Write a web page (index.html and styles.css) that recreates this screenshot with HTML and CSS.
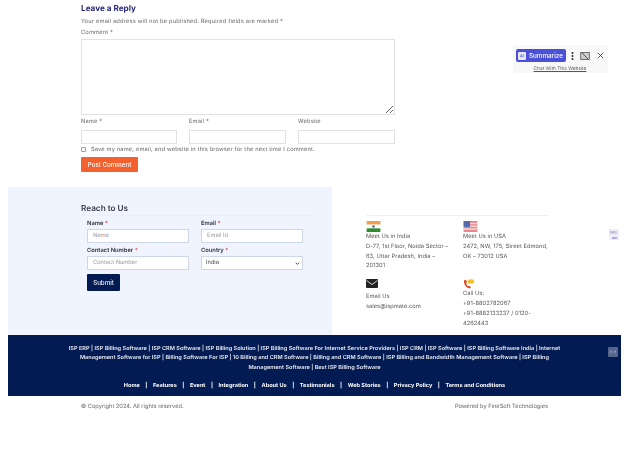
FILE: index.html
```html
<!DOCTYPE html>
<html lang="en">
<head>
<meta charset="utf-8">
<title>Leave a Reply</title>
<link rel="stylesheet" href="styles.css">
</head>
<body>
<main class="page">
  <section class="reply">
    <div class="reply-clip"><h2 class="reply-title">Leave a Reply</h2></div>
    <p class="reply-note">Your email address will not be published. Required fields are marked *</p>
    <label class="reply-label">Comment *</label>
    <textarea class="reply-text"></textarea>
    <div class="reply-fields">
      <div class="reply-field"><label class="reply-label">Name *</label><input class="reply-input" type="text"></div>
      <div class="reply-field"><label class="reply-label">Email *</label><input class="reply-input" type="text"></div>
      <div class="reply-field"><label class="reply-label">Website</label><input class="reply-input" type="text"></div>
    </div>
    <div class="reply-save"><span class="reply-check"></span><span>Save my name, email, and website in this browser for the next time I comment.</span></div>
    <button class="reply-submit" type="button">Post Comment</button>
  </section>

  <section class="reach">
    <div class="reach-left">
      <h3 class="reach-title">Reach to Us</h3>
      <div class="reach-form">
        <div class="reach-field"><label class="reach-label">Name <i>*</i></label><div class="reach-input">Name</div></div>
        <div class="reach-field"><label class="reach-label">Email <i>*</i></label><div class="reach-input">Email Id</div></div>
        <div class="reach-field"><label class="reach-label">Contact Number <i>*</i></label><div class="reach-input">Contact Number</div></div>
        <div class="reach-field"><label class="reach-label">Country <i>*</i></label>
          <div class="reach-input reach-select">India
            <svg class="reach-caret" viewBox="0 0 8 5" width="5" height="3"><path d="M1 1l3 3 3-3" fill="none" stroke="#333" stroke-width="1.4"/></svg>
          </div>
        </div>
      </div>
      <button class="reach-submit" type="button">Submit</button>
    </div>
    <div class="reach-right">
      <div class="contact-grid">
        <div class="contact">
          <svg class="contact-flag" viewBox="0 0 15 12" width="15" height="11">
            <rect width="15" height="4" fill="#f0a04b"/><rect y="4" width="15" height="4" fill="#fff"/><rect y="8" width="15" height="4" fill="#2e8b2e"/><circle cx="7.5" cy="6" r="1.4" fill="#55608f"/>
          </svg>
          <p>Meet Us in India</p>
          <p class="contact-gap">D-77, 1st Floor, Noida Sector – 63, Uttar Pradesh, India – 201301</p>
        </div>
        <div class="contact">
          <svg class="contact-flag" viewBox="0 0 15 12" width="15" height="11">
            <rect width="15" height="12" fill="#e8878b"/><rect y="2" width="15" height="1.5" fill="#f7dcdc"/><rect y="5" width="15" height="1.5" fill="#f7dcdc"/><rect y="8" width="15" height="1.5" fill="#f7dcdc"/><rect width="7" height="6.5" fill="#5468ac"/>
          </svg>
          <p>Meet Us in USA</p>
          <p class="contact-gap">2472, NW, 175, Street Edmond, OK – 73012 USA</p>
        </div>
        <div class="contact contact-mail">
          <svg class="contact-icon" viewBox="0 0 12 9" width="12" height="9">
            <rect width="12" height="9" rx="1" fill="#222"/><path d="M0.5 1.5L6 5.5l5.5-4" fill="none" stroke="#fff" stroke-width=".8"/>
          </svg>
          <p class="contact-mailtext">Email Us</p>
          <p>sales@ispmate.com</p>
        </div>
        <div class="contact contact-call">
          <svg class="contact-icon" viewBox="0 0 12 10" width="12" height="10">
            <ellipse cx="8" cy="2.5" rx="3.2" ry="2.2" fill="#f4bf2f"/>
            <path d="M1 1.6C.5 5 3 8.8 6.8 9.6l1.2-1.5-2-1.4-1 .6C4.1 6.4 3.3 5 3.1 3.9l1-.7L3 .8z" fill="#e8431f"/>
          </svg>
          <p>Call Us:</p>
          <p>+91-8802782067</p>
          <p>+91-8882133237 / 0120-4262443</p>
        </div>
      </div>
    </div>
  </section>

  <footer class="band">
    <p class="band-links">ISP ERP | ISP Billing Software | ISP CRM Software | ISP Billing Solution | ISP Billing Software For Internet Service Providers | ISP CRM | ISP Software | ISP Billing Software India | Internet Management Software for ISP | Billing Software For ISP | 10 Billing and CRM Software | Billing and CRM Software | ISP Billing and Bandwidth Management Software | ISP Billing Management Software | Best ISP Billing Software</p>
    <nav class="band-nav">
      <a>Home</a><span>|</span><a>Features</a><span>|</span><a>Event</a><span>|</span><a>Integration</a><span>|</span><a>About Us</a><span>|</span><a>Testimonials</a><span>|</span><a>Web Stories</a><span>|</span><a>Privacy Policy</a><span>|</span><a>Terms and Conditions</a>
    </nav>
  </footer>
  <div class="legal"><span>© Copyright 2024. All rights reserved.</span><span>Powered by FineSoft Technologies</span></div>
</main>

<aside class="widget">
  <div class="widget-row">
    <button class="widget-btn" type="button"><span class="widget-logo">AI</span>Summarize</button>
    <svg class="widget-dots" viewBox="0 0 4 12" width="3" height="10"><circle cx="2" cy="2" r="1.3"/><circle cx="2" cy="6" r="1.3"/><circle cx="2" cy="10" r="1.3"/></svg>
    <svg class="widget-hide" viewBox="0 0 12 10" width="10" height="8"><rect x=".6" y=".6" width="10.8" height="8.8" fill="#ccc" stroke="#555" stroke-width="1"/><path d="M2 1l8 8" stroke="#333" stroke-width="1"/></svg>
    <svg class="widget-x" viewBox="0 0 8 8" width="7" height="7"><path d="M1 1l6 6M7 1L1 7" stroke="#444" stroke-width="1"/></svg>
  </div>
  <div class="widget-chat">Chat With This Website</div>
</aside>
<div class="float-side">
  <svg viewBox="0 0 10 11" width="10" height="11"><rect width="10" height="11" fill="#eeedfb"/><path d="M2 2v3M2 2l1.5 2L5 2v3M7 2v3" stroke="#8f93a8" stroke-width=".7" fill="none"/><path d="M3 8h5v2H3z" fill="#b7a8ee"/></svg>
</div>
<div class="float-band">
  <svg viewBox="0 0 10 10" width="10" height="10"><rect width="10" height="10" rx="1" fill="#56648e"/><path d="M2.5 6.5v-3l2.5 2 2.5-2v3" stroke="#8e99b8" stroke-width=".8" fill="none"/></svg>
</div>
</body>
</html>
```

FILE: styles.css
```css
* { box-sizing: border-box; }
html, body { margin: 0; padding: 0; }
body {
  width: 638px;
  height: 451px;
  overflow: hidden;
  background: #fff;
  font-family: Inter, "Liberation Sans", sans-serif;
  color: #555;
  position: relative;
  text-rendering: geometricPrecision;
}
.page { display: flex; flex-direction: column; filter: blur(.3px); }
p, h2, h3 { margin: 0; }

.reply { padding: 5px 0 0 81px; width: 395px; height: 187px; display: flex; flex-direction: column; }
.reply-clip { height: 8px; overflow: hidden; display: flex; align-items: flex-end; }
.reply-title { font-size: 8.2px; line-height: 10px; font-weight: 700; color: #2b2a7c; flex: none; }
.reply-note { font-size: 5.7px; line-height: 8px; margin-top: 5px; letter-spacing: .035em; color: #666; }
.reply-label { display: block; font-size: 5.7px; line-height: 8px; color: #666; letter-spacing: .03em; }
.reply-note + .reply-label { margin-top: 2.5px; }
.reply-text { display: block; width: 314px; height: 76px; margin: 2.5px 0 0; padding: 0; border: 1px solid #e2e2e2; background: #fff; border-radius: 0; }
.reply-fields { display: grid; grid-template-columns: 96px 97px 97px; column-gap: 12px; margin-top: 3px; width: 314px; }
.reply-label + .reply-input { margin-top: 4px; }
.reply-input { display: block; width: 100%; height: 14px; padding: 0; border: 1px solid #e2e2e2; background: #fff; border-radius: 0; }
.reply-save { display: flex; align-items: center; gap: 5px; height: 8px; margin-top: 1px; font-size: 5.7px; letter-spacing: .03em; color: #666; white-space: nowrap; }
.reply-check { width: 5px; height: 5px; border: 1px solid #999; border-radius: 1px; flex: none; }
.reply-submit { width: 57px; height: 15px; margin-top: 4px; padding: 0; border: 0; border-radius: 1px; background: #f3622e; color: #fff; font: 500 6.2px Inter, sans-serif; }

.reach { display: grid; grid-template-columns: 324px 289px; margin-left: 8px; width: 613px; height: 148px; }
.reach-left { background: #eff4ff; padding: 15.5px 21px 0 73px; }
.reach-title { font-size: 8.2px; line-height: 10px; font-weight: 600; color: #3a3a4a; padding-bottom: 2.5px; border-bottom: 1px solid #e9eef8; }
.reach-form { display: grid; grid-template-columns: 102px 102px; column-gap: 12px; row-gap: 4px; margin: 4px 0 0 6px; }
.reach-field { display: flex; flex-direction: column; }
.reach-label { font-size: 5.8px; line-height: 8px; font-weight: 600; color: #33343f; height: 9px; }
.reach-label i { font-style: normal; color: #e0323c; }
.reach-input { height: 14px; border: 1px solid #cfd6e4; background: #fff; font-size: 5.7px; line-height: 12px; padding-left: 5px; color: #999; position: relative; }
.reach-select { color: #444; padding-left: 4px; }
.reach-caret { position: absolute; right: 2px; top: 5px; }
.reach-submit { display: block; width: 33px; height: 17px; margin: 4px 0 0 6px; padding: 0; border: 0; border-radius: 1px; background: #021b52; color: #e6e9f2; font: 500 6.2px Inter, sans-serif; }

.reach-right { padding: 28px 73px 0 34px; }
.contact-grid { display: grid; grid-template-columns: 97px 85px; border-top: 1px solid #f0f0f0; padding-top: 4.5px; }
.contact { padding-right: 12px; }
.contact + .contact { padding-right: 0; }
.contact p { font-size: 5.7px; line-height: 9.8px; color: #555; letter-spacing: .01em; }
.contact p.contact-gap { margin-top: .5px; }
.contact-flag { display: block; }
.contact-mail { margin-top: 8px; }
.contact-call { margin-top: 8px; }
.contact-icon { display: block; }
.contact-mail .contact-mailtext { margin-top: 4px; }

.band { margin-left: 8px; width: 613px; height: 61px; background: #021b52; color: #e8ebf4; padding: 8.5px 0 0; border-top: 1px solid #0a1a40; }
.band-links { width: 500px; margin: 0 auto; text-align: center; font-size: 5.6px; line-height: 9.8px; font-weight: 600; }
.band-nav { display: flex; justify-content: center; gap: 5.5px; margin-top: 8px; font-size: 5.6px; line-height: 9px; font-weight: 700; color: #fff; }
.legal { display: flex; justify-content: space-between; width: 467px; margin: 7px 0 0 81px; font-size: 5.7px; line-height: 8px; color: #666; }

.widget { position: absolute; left: 513px; top: 45px; width: 95px; height: 28px; background: #f8f8f8; padding: 4px 0 0 3px; filter: blur(.3px); }
.widget-row { display: flex; align-items: center; height: 13px; }
.widget-btn { display: flex; align-items: center; gap: 3px; width: 50px; height: 13px; padding: 0 0 0 2px; border: 0; border-radius: 2px; background: #4a50d8; color: #fff; font: 500 6.3px Inter, sans-serif; }
.widget-logo { width: 8px; height: 8px; background: #e8e8ff; color: #4a50d8; font-size: 4px; line-height: 8px; text-align: center; border-radius: 1px; }
.widget-dots { margin-left: 5px; fill: #222; }
.widget-hide { margin-left: 6px; }
.widget-x { margin-left: 7px; }
.widget-chat { margin-top: 4px; text-align: center; width: 88px; font-size: 4.8px; line-height: 6px; color: #555; text-decoration: underline; }
.float-side { position: absolute; left: 609px; top: 229px; width: 10px; height: 11px; }
.float-band { position: absolute; left: 608px; top: 347px; width: 10px; height: 10px; }
.float-side svg, .float-band svg { display: block; }
```
